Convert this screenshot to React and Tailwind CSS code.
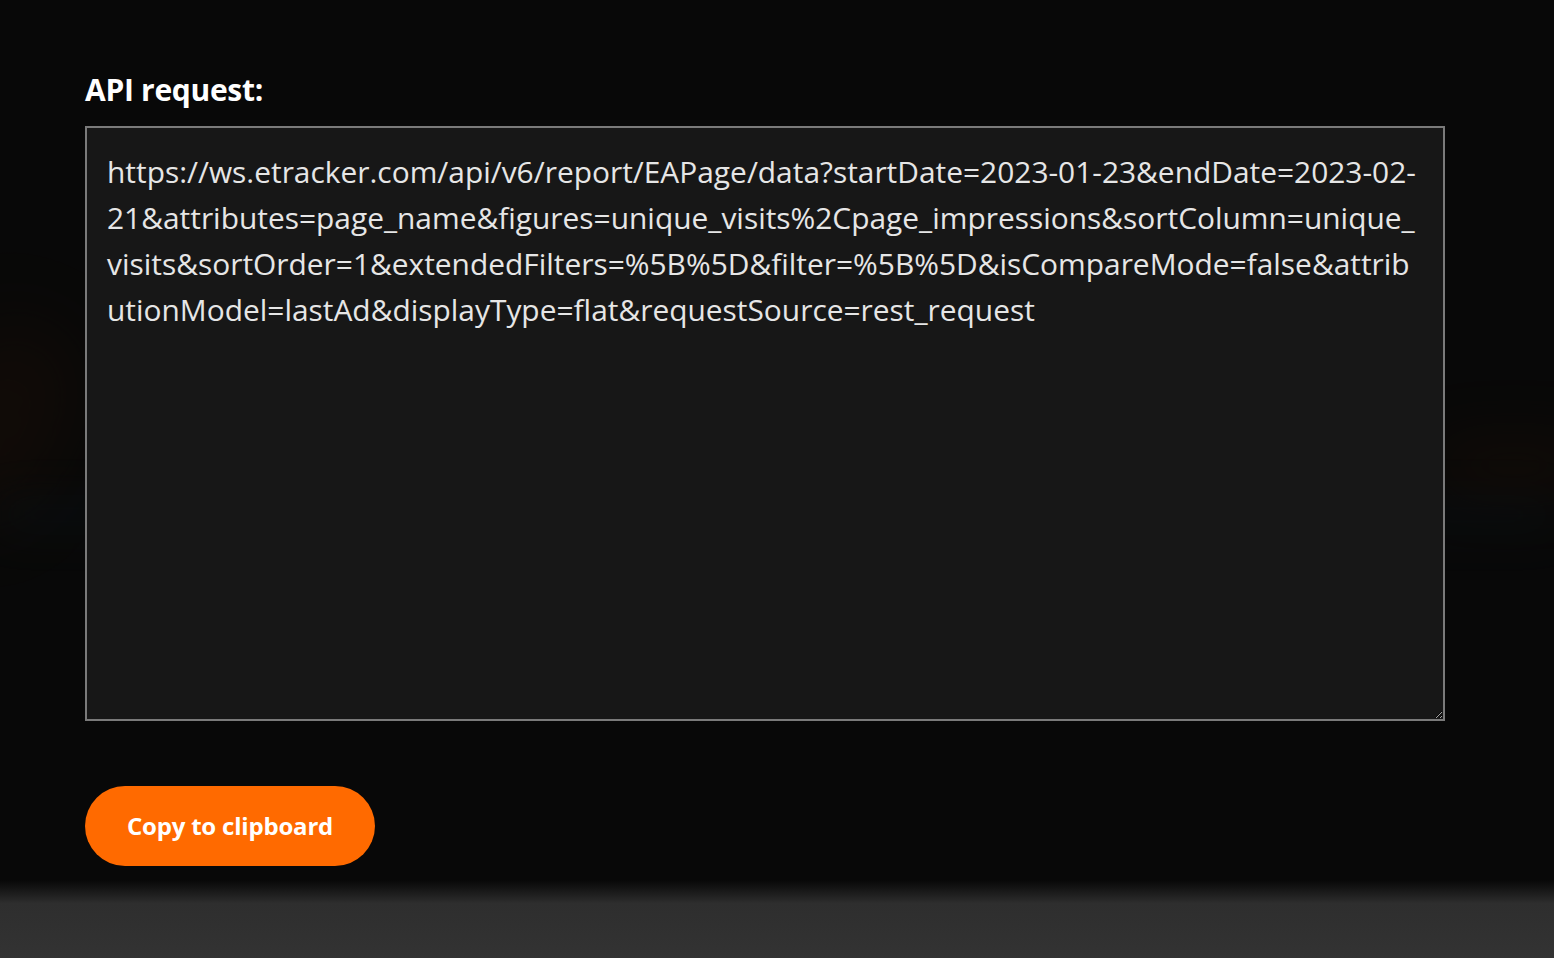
import React from 'react'

const apiUrl =
  'https://ws.etracker.com/api/v6/report/EAPage/data?startDate=2023-01-23&endDate=2023-02-21&attributes=page_name&figures=unique_visits%2Cpage_impressions&sortColumn=unique_visits&sortOrder=1&extendedFilters=%5B%5D&filter=%5B%5D&isCompareMode=false&attributionModel=lastAd&displayType=flat&requestSource=rest_request'

export default function App() {
  return (
    <div className="relative h-[958px] overflow-hidden bg-[#080808] font-['Open_Sans',_sans-serif] [font-variant-ligatures:none]">
      {/* faint blurred chart behind the panel */}
      <div className="pointer-events-none absolute inset-0">
        <div className="absolute left-[-60px] top-[320px] h-[200px] w-[120px] rotate-[25deg] rounded-full bg-[#3a1a05] opacity-20 blur-[40px]" />
        <div className="absolute left-0 top-[500px] h-[30px] w-full bg-[#0c1a22] opacity-30 blur-[20px]" />
        <div className="absolute right-[-40px] top-[440px] h-[50px] w-[160px] rounded-full bg-[#2a1404] opacity-30 blur-[30px]" />
      </div>

      <div className="relative flex h-[880px] flex-col px-[85px] pt-[72px]">
        <h2 className="text-[30px] font-bold leading-[36px] tracking-[-0.3px] text-white">
          API request:
        </h2>
        <textarea
          readOnly
          defaultValue={apiUrl}
          className="mt-[18px] h-[595px] w-[1360px] resize border-2 border-[#7a7a7a] bg-[#171717] px-5 py-[21px] text-[29.9px] leading-[46px] text-[#e6e6e6] outline-none"
        />
        <div className="mt-[65px]">
          <button className="h-[80px] w-[290px] rounded-full bg-[#ff6a00] text-[24px] font-bold tracking-[-0.2px] text-white">
            Copy to clipboard
          </button>
        </div>
      </div>

      <div className="relative h-[78px] bg-gradient-to-b from-[#080808] via-[#2e2e2e] via-30% to-[#333333]" />
    </div>
  )
}
